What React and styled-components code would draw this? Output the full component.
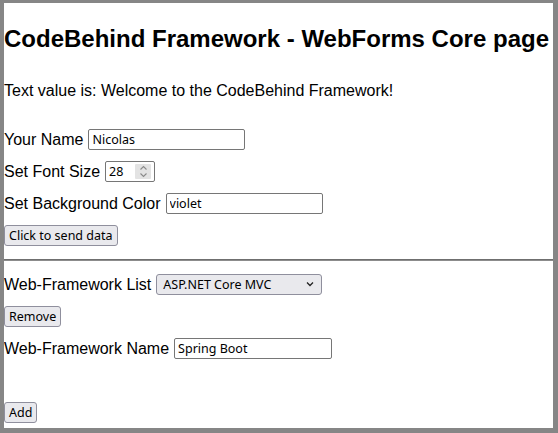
import React from 'react';
import styled, { createGlobalStyle } from 'styled-components';

const GlobalStyle = createGlobalStyle`
  html, body {
    margin: 0;
    padding: 0;
    background: #ffffff;
  }
  body {
    font-family: "Liberation Sans", Arial, sans-serif;
    color: #000000;
  }
`;

const Frame = styled.div`
  box-sizing: border-box;
  width: 558px;
  height: 433px;
  border-style: solid;
  border-color: #868686;
  border-width: 3px 5px 5px 4px;
  background: #ffffff;
  overflow: hidden;
`;

const Title = styled.h2`
  margin: 22px 0 0;
  font-size: 24px;
  font-weight: bold;
  line-height: normal;
  white-space: nowrap;
`;

const Message = styled.p`
  margin: 29px 0 0;
  font-size: 16px;
  line-height: normal;
`;

const Form = styled.div`
  display: flex;
  flex-direction: column;
  gap: 11px;
  margin-top: ${(p) => p.$top || 0}px;
`;

const Row = styled.div`
  display: flex;
  align-items: center;
  gap: 5px;
  height: 21px;
  margin-top: ${(p) => p.$extra || 0}px;
`;

const Label = styled.label`
  font-size: 16px;
  line-height: normal;
  white-space: nowrap;
`;

const controlFont = `
  font-family: "Noto Sans", "Open Sans", sans-serif;
  font-size: 12.5px;
  color: #000000;
`;

const TextBox = styled.input`
  ${controlFont}
  box-sizing: border-box;
  width: ${(p) => p.$width || 157}px;
  height: 21px;
  margin: 0;
  padding: 0 3px;
  border: 1px solid #767676;
  border-radius: 2px;
  background: #ffffff;
  outline: none;
`;

const NumberBox = styled.div`
  box-sizing: border-box;
  display: flex;
  align-items: center;
  width: 50px;
  height: 21px;
  padding: 0 3px;
  border: 1px solid #767676;
  border-radius: 2px;
  background: #ffffff;
`;

const NumberField = styled.input`
  ${controlFont}
  flex: 1;
  min-width: 0;
  margin: 0;
  padding: 0;
  border: none;
  outline: none;
  background: transparent;
`;

const Spinner = styled.span`
  display: flex;
  align-items: center;
  justify-content: center;
  width: 16px;
  height: 15px;
  background: #e3e3e3;
  border-radius: 1px;
`;

const SelectWrap = styled.div`
  position: relative;
  width: 166px;
  height: 21px;
`;

const Select = styled.select`
  ${controlFont}
  box-sizing: border-box;
  width: 100%;
  height: 100%;
  margin: 0;
  padding: 0 20px 0 6px;
  appearance: none;
  border: 1px solid #8f8f9d;
  border-radius: 3px;
  background: #e9e9ed;
  outline: none;
`;

const Caret = styled.svg`
  position: absolute;
  right: 8px;
  top: 7px;
  pointer-events: none;
`;

const Button = styled.button`
  ${controlFont}
  box-sizing: border-box;
  height: 21px;
  margin: 0;
  padding: 0 4px;
  border: 1px solid #8f8f9d;
  border-radius: 3px;
  background: #e9e9ed;
  cursor: pointer;
  white-space: nowrap;
`;

const Divider = styled.hr`
  margin: 13px 0 13px;
  height: 0;
  border: none;
  border-top: 1px solid #6f6f6f;
  border-bottom: 1px solid #8c8c8c;
`;

export default function App() {
  return (
    <>
      <GlobalStyle />
      <Frame>
        <Title>CodeBehind Framework - WebForms Core page</Title>
        <Message>Text value is: Welcome to the CodeBehind Framework!</Message>

        <Form $top={29}>
          <Row>
            <Label htmlFor="TextBox1">Your Name</Label>
            <TextBox id="TextBox1" defaultValue="Nicolas" />
          </Row>
          <Row>
            <Label htmlFor="TextBox2">Set Font Size</Label>
            <NumberBox>
              <NumberField id="TextBox2" defaultValue="28" />
              <Spinner>
                <svg width="9" height="13" viewBox="0 0 9 13" fill="none" stroke="#8a8a8a" strokeWidth="1.1">
                  <path d="M1.5 4.5 L4.5 1.5 L7.5 4.5" />
                  <path d="M1.5 8.5 L4.5 11.5 L7.5 8.5" />
                </svg>
              </Spinner>
            </NumberBox>
          </Row>
          <Row>
            <Label htmlFor="TextBox3">Set Background Color</Label>
            <TextBox id="TextBox3" defaultValue="violet" />
          </Row>
          <Row>
            <Button type="button">Click to send data</Button>
          </Row>
        </Form>

        <Divider />

        <Form>
          <Row>
            <Label htmlFor="ListBox1">Web-Framework List</Label>
            <SelectWrap>
              <Select id="ListBox1" defaultValue="mvc">
                <option value="mvc">ASP.NET Core MVC</option>
                <option value="razor">ASP.NET Core Razor Pages</option>
                <option value="django">Django</option>
                <option value="laravel">Laravel</option>
              </Select>
              <Caret width="8" height="6" viewBox="0 0 8 6" fill="none" stroke="#222" strokeWidth="1.3">
                <path d="M1 1.5 L4 4.5 L7 1.5" />
              </Caret>
            </SelectWrap>
          </Row>
          <Row>
            <Button type="button">Remove</Button>
          </Row>
          <Row>
            <Label htmlFor="TextBox4">Web-Framework Name</Label>
            <TextBox id="TextBox4" defaultValue="Spring Boot" $width={158} />
          </Row>
          <Row $extra={32}>
            <Button type="button">Add</Button>
          </Row>
        </Form>
      </Frame>
    </>
  );
}
